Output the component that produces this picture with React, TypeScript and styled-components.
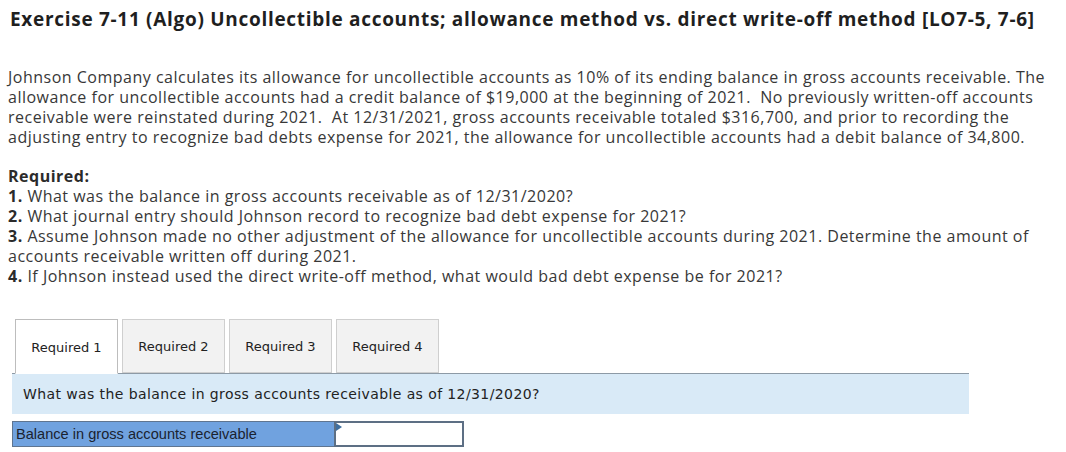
import styled, { createGlobalStyle } from 'styled-components';

const GlobalStyle = createGlobalStyle`
  html, body {
    margin: 0;
    padding: 0;
    background: #ffffff;
  }
`;

const StyledElement = styled.div`
  &.Exercise {
    width: 1066px;
    padding: 6px 0 0 0;
    font-family: 'Open Sans', Lato, Arial, sans-serif;
    color: #2b2b2b;
  }
  .Exercise__Title {
    margin: 0 0 0 10px;
    font-size: 19px;
    line-height: 26px;
    font-weight: 700;
    letter-spacing: 0.7px;
    color: #1f1f1f;
    white-space: nowrap;
  }
  .Exercise__Body {
    margin: 35px 0 0 8px;
    font-size: 16px;
    line-height: 20px;
    letter-spacing: 0.5px;
    color: #383838;
    white-space: nowrap;
  }
  .Exercise__Para {
    margin: 0;
  }
  .Exercise__Required {
    margin: 19px 0 0 0;
    font-weight: 700;
    color: #2b2b2b;
  }
  .Exercise__List {
    margin: 0;
    padding: 0;
    list-style: none;
  }
  .Exercise__Num {
    font-weight: 700;
    color: #2b2b2b;
  }
`;

const TabRow = styled.div`
  display: flex;
  gap: 4px;
  margin: 33px 0 0 15px;
  align-items: flex-start;
`;

const Tab = styled.button<{ $active?: boolean }>`
  width: 103px;
  height: ${(p) => (p.$active ? '55px' : '54px')};
  box-sizing: border-box;
  padding: 1px 0 0 0;
  font-family: Verdana, 'DejaVu Sans', sans-serif;
  font-size: 13px;
  color: #222222;
  background: ${(p) => (p.$active ? '#ffffff' : '#f2f2f2')};
  border: 1px solid ${(p) => (p.$active ? '#bdbdbd' : '#cfcfcf')};
  border-bottom: ${(p) => (p.$active ? '1px solid #ffffff' : '1px solid #cfcfcf')};
  margin-bottom: ${(p) => (p.$active ? '-1px' : '0')};
  position: relative;
  z-index: ${(p) => (p.$active ? 1 : 0)};
  cursor: pointer;
`;

const Question = styled.div`
  margin: 0 0 0 12px;
  width: 957px;
  height: 41px;
  box-sizing: border-box;
  display: flex;
  align-items: center;
  padding-left: 11px;
  background: #d9eaf7;
  border-top: 1px solid #8d9aa6;
  font-family: Verdana, 'DejaVu Sans', sans-serif;
  font-size: 14px;
  letter-spacing: 0.4px;
  color: #222222;
`;

const AnswerRow = styled.div`
  display: flex;
  margin: 7px 0 0 12px;
  height: 26px;
`;

const AnswerLabel = styled.div`
  width: 322px;
  box-sizing: border-box;
  display: flex;
  align-items: center;
  padding-left: 3px;
  background: #70a2df;
  border: 1px solid #5f7590;
  border-right: none;
  font-family: 'Liberation Sans', Arial, sans-serif;
  font-size: 14.6px;
  color: #1b2330;
`;

const AnswerInputWrap = styled.div`
  position: relative;
  width: 130px;
  box-sizing: border-box;
  border: 2px solid #5d6f84;
  background: #ffffff;
`;

const AnswerInput = styled.input`
  width: 100%;
  height: 100%;
  box-sizing: border-box;
  border: none;
  outline: none;
  background: transparent;
  font-family: 'Liberation Sans', Arial, sans-serif;
  font-size: 14px;
`;

const Marker = styled.span`
  position: absolute;
  left: 0;
  top: 0;
  width: 0;
  height: 0;
  border-top: 4px solid transparent;
  border-bottom: 4px solid transparent;
  border-left: 6px solid #3f6f9f;
`;

const items: [string, string][] = [
  ['1.', ' What was the balance in gross accounts receivable as of 12/31/2020?'],
  ['2.', ' What journal entry should Johnson record to recognize bad debt expense for 2021?'],
  [
    '3.',
    ' Assume Johnson made no other adjustment of the allowance for uncollectible accounts during 2021. Determine the amount of\naccounts receivable written off during 2021.',
  ],
  ['4.', ' If Johnson instead used the direct write-off method, what would bad debt expense be for 2021?'],
];

const App = () => (
  <>
    <GlobalStyle />
    <StyledElement className="Exercise">
      <h1 className="Exercise__Title">
        Exercise 7-11 (Algo) Uncollectible accounts; allowance method vs. direct write-off method [LO7-5, 7-6]
      </h1>
      <div className="Exercise__Body">
        <p className="Exercise__Para">
          Johnson Company calculates its allowance for uncollectible accounts as 10% of its ending balance in gross accounts receivable. The
          <br />
          allowance for uncollectible accounts had a credit balance of $19,000 at the beginning of 2021.&nbsp; No previously written-off accounts
          <br />
          receivable were reinstated during 2021.&nbsp; At 12/31/2021, gross accounts receivable totaled $316,700, and prior to recording the
          <br />
          adjusting entry to recognize bad debts expense for 2021, the allowance for uncollectible accounts had a debit balance of 34,800.
        </p>
        <p className="Exercise__Para Exercise__Required">Required:</p>
        <ul className="Exercise__List">
          {items.map(([n, t]) => (
            <li key={n}>
              <span className="Exercise__Num">{n}</span>
              {t.split('\n').map((part, i) => (
                <span key={i}>
                  {i > 0 && <br />}
                  {part}
                </span>
              ))}
            </li>
          ))}
        </ul>
      </div>
      <TabRow>
        <Tab type="button" $active>Required 1</Tab>
        <Tab type="button">Required 2</Tab>
        <Tab type="button">Required 3</Tab>
        <Tab type="button">Required 4</Tab>
      </TabRow>
      <Question>What was the balance in gross accounts receivable as of 12/31/2020?</Question>
      <AnswerRow>
        <AnswerLabel>Balance in gross accounts receivable</AnswerLabel>
        <AnswerInputWrap>
          <Marker />
          <AnswerInput type="text" />
        </AnswerInputWrap>
      </AnswerRow>
    </StyledElement>
  </>
);

export default App;
